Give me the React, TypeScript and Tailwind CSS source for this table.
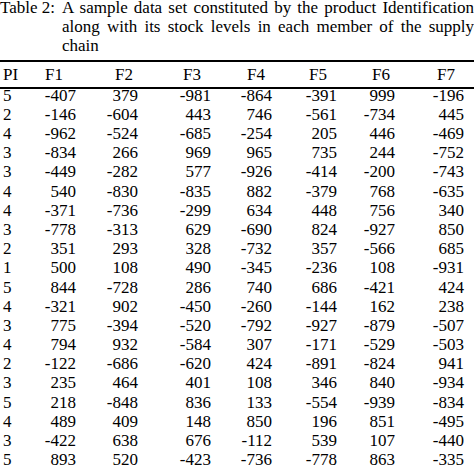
import { FC } from "react";

const rows: string[][] = [
  ["5", "-407", "379", "-981", "-864", "-391", "999", "-196"],
  ["2", "-146", "-604", "443", "746", "-561", "-734", "445"],
  ["4", "-962", "-524", "-685", "-254", "205", "446", "-469"],
  ["3", "-834", "266", "969", "965", "735", "244", "-752"],
  ["3", "-449", "-282", "577", "-926", "-414", "-200", "-743"],
  ["4", "540", "-830", "-835", "882", "-379", "768", "-635"],
  ["4", "-371", "-736", "-299", "634", "448", "756", "340"],
  ["3", "-778", "-313", "629", "-690", "824", "-927", "850"],
  ["2", "351", "293", "328", "-732", "357", "-566", "685"],
  ["1", "500", "108", "490", "-345", "-236", "108", "-931"],
  ["5", "844", "-728", "286", "740", "686", "-421", "424"],
  ["4", "-321", "902", "-450", "-260", "-144", "162", "238"],
  ["3", "775", "-394", "-520", "-792", "-927", "-879", "-507"],
  ["4", "794", "932", "-584", "307", "-171", "-529", "-503"],
  ["2", "-122", "-686", "-620", "424", "-891", "-824", "941"],
  ["3", "235", "464", "401", "108", "346", "840", "-934"],
  ["5", "218", "-848", "836", "133", "-554", "-939", "-834"],
  ["4", "489", "409", "148", "850", "196", "851", "-495"],
  ["3", "-422", "638", "676", "-112", "539", "107", "-440"],
  ["5", "893", "520", "-423", "-736", "-778", "863", "-335"],
];

const headers = [
  { label: "PI", className: "pl-[3px]" },
  { label: "F1", className: "pl-[5px]" },
  { label: "F2", className: "pl-[39px]" },
  { label: "F3", className: "pl-[45px]" },
  { label: "F4", className: "pl-[36px]" },
  { label: "F5", className: "pl-[37px]" },
  { label: "F6", className: "pl-[35px]" },
  { label: "F7", className: "pl-[42px]" },
];

const gridCols = "grid grid-cols-[40px_36px_62px_73px_61px_65px_58px_69px]";

const App: FC = () => {
  return (
    <div className="w-[474px] h-[475px] overflow-hidden bg-white text-black font-['Liberation_Serif',serif] text-[17px]">
      {/* caption */}
      <div className="flex mt-[-2px] leading-[19px]">
        <span className="w-[62px] shrink-0 whitespace-nowrap">Table 2:</span>
        <p className="flex-1 text-justify">
          A sample data set constituted by the product Identification along with its stock
          levels in each member of the supply chain
        </p>
      </div>

      <div className="mt-[5px] h-[2px] bg-black" />

      <div className={`${gridCols} pt-[3px] leading-[19px]`}>
        {headers.map((h) => (
          <div key={h.label} className={h.className}>
            {h.label}
          </div>
        ))}
      </div>

      <div className="mt-[3px] h-[1.5px] bg-black" />

      <div className="mt-[-2.85px]">
        {rows.map((row, i) => (
          <div key={i} className={`${gridCols} h-[19.2px] leading-[19.2px]`}>
            {row.map((cell, j) =>
              j === 0 ? (
                <div key={j} className="pl-[3px]">
                  {cell}
                </div>
              ) : (
                <div key={j} className="text-right">
                  {cell}
                </div>
              )
            )}
          </div>
        ))}
      </div>
    </div>
  );
};

export default App;
